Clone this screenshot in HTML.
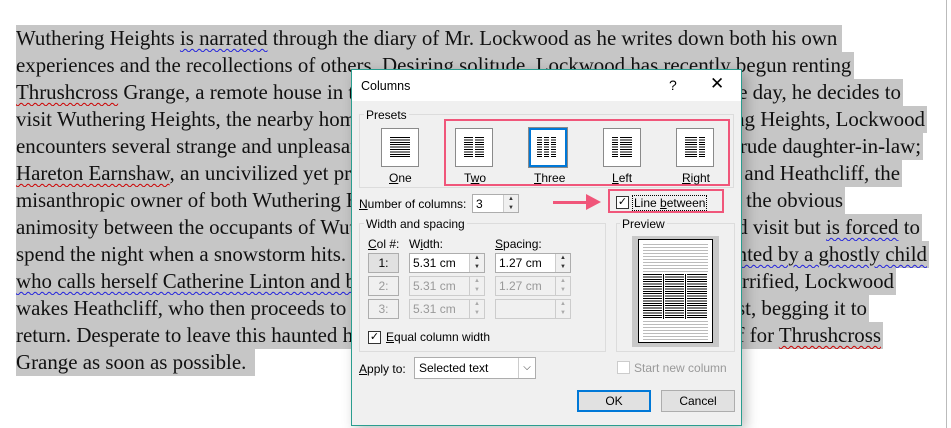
<!DOCTYPE html>
<html><head><meta charset="utf-8"><style>
*{margin:0;padding:0;box-sizing:border-box}
body{width:951px;height:428px;background:#fff;position:relative;overflow:hidden;font-family:"Liberation Sans",sans-serif}
.ln{position:absolute;left:16px;height:27px;background:#c6c6c6;font-family:"Liberation Serif",serif;font-size:20.9px;line-height:27px;white-space:nowrap;overflow:hidden;color:#111}
.r{position:absolute;right:2px;top:0;background:#c6c6c6;padding-left:6px}
.sq{text-decoration:underline wavy #c00;text-decoration-thickness:1px;text-underline-offset:3px}
.sb{text-decoration:underline wavy #2222dd;text-decoration-thickness:1px;text-underline-offset:3px}
.a{position:absolute}
.dlg{position:absolute;left:351px;top:69px;width:391px;height:357px;background:#f0f0f0;border:1px solid #2a9d8f;box-shadow:4px 4px 12px rgba(0,0,0,.25)}
.t{font-size:12px;color:#000;position:absolute;white-space:nowrap}
.grp{position:absolute;border:1px solid #dcdcdc}
.ic{position:absolute;width:38px;height:39px;background:#fff;border:1px solid #8a8a8a}
.lines{position:absolute;background:repeating-linear-gradient(#000 0 1px,transparent 1px 2.4px)}
.fld{position:absolute;height:20px;background:#fff;border:1px solid #adadad;font-size:12px;line-height:18px;padding-left:3px}
.dis{background:#f0f0f0;color:#999;border-color:#ccc}
.spin{position:absolute;right:0;top:0;width:15px;height:18px;border-left:1px solid #ccc;background:#f0f0f0;font-size:6px;line-height:9px;text-align:center;color:#333}
.btn{position:absolute;height:20px;border:1px solid #adadad;background:#e1e1e1;font-size:12px;text-align:center;line-height:18px}
.cb{position:absolute;width:13px;height:13px;border:1px solid #333;background:#fff;font-size:11px;line-height:11px;text-align:center}
u{text-decoration:underline}
</style></head><body>
<div class="a" style="left:946px;top:0;width:1px;height:428px;background:#bbb"></div>
<div class="ln" style="top:25px;width:826px">Wuthering Heights <span class="sb">is narrated</span> through the diary of Mr. Lockwood as he writes down both his own</div>
<div class="ln" style="top:52px;width:838px">experiences and the recollections of others. Desiring solitude, Lockwood has recently begun renting</div>
<div class="ln" style="top:79px;width:887px"><span class="sq">Thrushcross</span> Grange, a remote house in the<span class="r">Yorkshire moors. One day, he decides to</span></div>
<div class="ln" style="top:106px;width:911px">visit Wuthering Heights, the nearby home<span class="r">of his landlord. At Wuthering Heights, Lockwood</span></div>
<div class="ln" style="top:133px;width:907px">encounters several strange and unpleasant<span class="r">people, including the crude daughter-in-law;</span></div>
<div class="ln" style="top:160px;width:886px"><span class="sq">Hareton Earnshaw</span>, an uncivilized yet proud<span class="r">young man; and Heathcliff, the</span></div>
<div class="ln" style="top:187px;width:829px">misanthropic owner of both Wuthering Heights<span class="r">and the Grange. Sensing the obvious</span></div>
<div class="ln" style="top:214px;width:906px">animosity between the occupants of Wuthering<span class="r">he plans a second visit but <span class="sb">is forced</span> to</span></div>
<div class="ln" style="top:241px;width:913px">spend the night when a snowstorm hits.<span class="r">In his room he is then <span class="sb">haunted by a ghostly child</span></span></div>
<div class="ln" style="top:268px;width:880px"><span class="sb">who calls herself Catherine Linton and begs</span><span class="r">to be let in the window. Terrified, Lockwood</span></div>
<div class="ln" style="top:295px;width:853px">wakes Heathcliff, who then proceeds to call<span class="r">out into the night to the ghost, begging it to</span></div>
<div class="ln" style="top:322px;width:867px">return. Desperate to leave this haunted house<span class="r">Lockwood leaves himself for <span class="sq">Thrushcross</span></span></div>
<div class="ln" style="top:349px;width:239px">Grange as soon as possible.</div>

<div class="dlg">
 <div class="a" style="left:0;top:0;width:389px;height:31px;background:#fff"></div>
 <div class="t" style="left:9px;top:9px;font-size:12.5px">Columns</div>
 <div class="t" style="left:317px;top:7px;font-size:14px">?</div>
 <div class="t" style="left:358px;top:4px;font-size:17px;font-weight:300">✕</div>
 <div class="grp" style="left:7px;top:44px;width:375px;height:74px"></div>
 <div class="t" style="left:12px;top:38px;background:#f0f0f0;padding:0 2px">Presets</div>
 <div class="a" style="left:92px;top:49px;width:286px;height:67px;border:2px solid #f0567a"></div>
 <div class="ic" style="left:29px;top:58px"><div class="lines" style="left:8px;top:8px;width:20px;height:21px"></div></div>
 <div class="ic" style="left:103px;top:58px"><div class="lines" style="left:8px;top:8px;width:9px;height:21px"></div><div class="lines" style="left:19px;top:8px;width:9px;height:21px"></div></div>
 <div class="ic" style="left:177px;top:58px;border:2px solid #0078d7;outline:1px solid #8a8a8a"><div class="lines" style="left:6px;top:7px;width:5px;height:21px"></div><div class="lines" style="left:13px;top:7px;width:5px;height:21px"></div><div class="lines" style="left:20px;top:7px;width:5px;height:21px"></div></div>
 <div class="ic" style="left:251px;top:58px"><div class="lines" style="left:8px;top:8px;width:6px;height:21px"></div><div class="lines" style="left:16px;top:8px;width:12px;height:21px"></div></div>
 <div class="ic" style="left:324px;top:58px"><div class="lines" style="left:8px;top:8px;width:12px;height:21px"></div><div class="lines" style="left:22px;top:8px;width:6px;height:21px"></div></div>
 <div class="t" style="left:37px;top:101px"><u>O</u>ne</div>
 <div class="t" style="left:112px;top:101px">T<u>w</u>o</div>
 <div class="t" style="left:182px;top:101px"><u>T</u>hree</div>
 <div class="t" style="left:260px;top:101px"><u>L</u>eft</div>
 <div class="t" style="left:330px;top:101px"><u>R</u>ight</div>
 <div class="t" style="left:7px;top:127px"><u>N</u>umber of columns:</div>
 <div class="fld" style="left:120px;top:124px;width:47px;height:19px">3<div class="spin" style="height:17px">▲<br>▼</div></div>
 <div class="a" style="left:201px;top:131px;width:38px;height:3px;background:#f0567a"></div>
 <div class="a" style="left:234px;top:124px;width:0;height:0;border-left:15px solid #f0567a;border-top:8px solid transparent;border-bottom:8px solid transparent"></div>
 <div class="a" style="left:256px;top:119px;width:116px;height:24px;border:2px solid #f0567a"></div>
 <div class="cb" style="left:264px;top:126px">✓</div>
 <div class="t" style="left:280px;top:125px;border:1px dotted #000;padding:0 1px">Line <u>b</u>etween</div>
 <div class="grp" style="left:7px;top:153px;width:247px;height:129px"></div>
 <div class="t" style="left:12px;top:147px;background:#f0f0f0;padding:0 2px">Width and spacing</div>
 <div class="grp" style="left:264px;top:153px;width:119px;height:129px"></div>
 <div class="t" style="left:268px;top:147px;background:#f0f0f0;padding:0 2px">Preview</div>
 <div class="t" style="left:16px;top:167px"><u>C</u>ol #:</div>
 <div class="t" style="left:57px;top:167px">W<u>i</u>dth:</div>
 <div class="t" style="left:143px;top:167px"><u>S</u>pacing:</div>
 <div class="btn" style="left:16px;top:183px;width:31px">1:</div>
 <div class="btn" style="left:16px;top:206px;width:31px;color:#999;background:#f0f0f0">2:</div>
 <div class="btn" style="left:16px;top:229px;width:31px;color:#999;background:#f0f0f0">3:</div>
 <div class="fld" style="left:57px;top:183px;width:76px">5.31 cm<div class="spin">▲<br>▼</div></div>
 <div class="fld dis" style="left:57px;top:206px;width:76px">5.31 cm<div class="spin" style="color:#aaa">▲<br>▼</div></div>
 <div class="fld dis" style="left:57px;top:229px;width:76px">5.31 cm<div class="spin" style="color:#aaa">▲<br>▼</div></div>
 <div class="fld" style="left:143px;top:183px;width:76px">1.27 cm<div class="spin">▲<br>▼</div></div>
 <div class="fld dis" style="left:143px;top:206px;width:76px">1.27 cm<div class="spin" style="color:#aaa">▲<br>▼</div></div>
 <div class="fld dis" style="left:143px;top:229px;width:76px"><div class="spin" style="color:#aaa">▲<br>▼</div></div>
 <div class="cb" style="left:16px;top:261px">✓</div>
 <div class="t" style="left:34px;top:260px"><u>E</u>qual column width</div>
 <div class="a" style="left:280px;top:166px;width:87px;height:111px;background:#c8c8c8"></div>
 <div class="a" style="left:286px;top:169px;width:75px;height:104px;background:#fff;border:1px solid #000">
  <div class="a" style="left:4px;top:4px;width:65px;height:29px;background:repeating-linear-gradient(#bbb 0 1px,transparent 1px 3px)"></div>
  <div class="a" style="left:4px;top:34px;width:19px;height:45px;background:repeating-linear-gradient(#000 0 1px,transparent 1px 2.4px)"></div>
  <div class="a" style="left:24px;top:34px;width:1px;height:45px;background:#000"></div>
  <div class="a" style="left:26px;top:34px;width:19px;height:45px;background:repeating-linear-gradient(#000 0 1px,transparent 1px 2.4px)"></div>
  <div class="a" style="left:46px;top:34px;width:1px;height:45px;background:#000"></div>
  <div class="a" style="left:48px;top:34px;width:20px;height:45px;background:repeating-linear-gradient(#000 0 1px,transparent 1px 2.4px)"></div>
  <div class="a" style="left:4px;top:81px;width:65px;height:20px;background:repeating-linear-gradient(#bbb 0 1px,transparent 1px 3px)"></div>
 </div>
 <div class="t" style="left:7px;top:292px"><u>A</u>pply to:</div>
 <div class="fld" style="left:62px;top:287px;width:122px;height:22px;line-height:20px;padding-left:4px">Selected text<div class="spin" style="width:17px;height:20px;font-size:10px;line-height:20px;background:#fff">⌵</div></div>
 <div class="cb" style="left:265px;top:291px;border-color:#ccc"></div>
 <div class="t" style="left:282px;top:291px;color:#999">Start new column</div>
 <div class="btn" style="left:225px;top:320px;width:74px;height:22px;border:2px solid #0078d7;line-height:18px">OK</div>
 <div class="btn" style="left:309px;top:320px;width:74px;height:22px;line-height:20px">Cancel</div>
</div>
</body></html>
